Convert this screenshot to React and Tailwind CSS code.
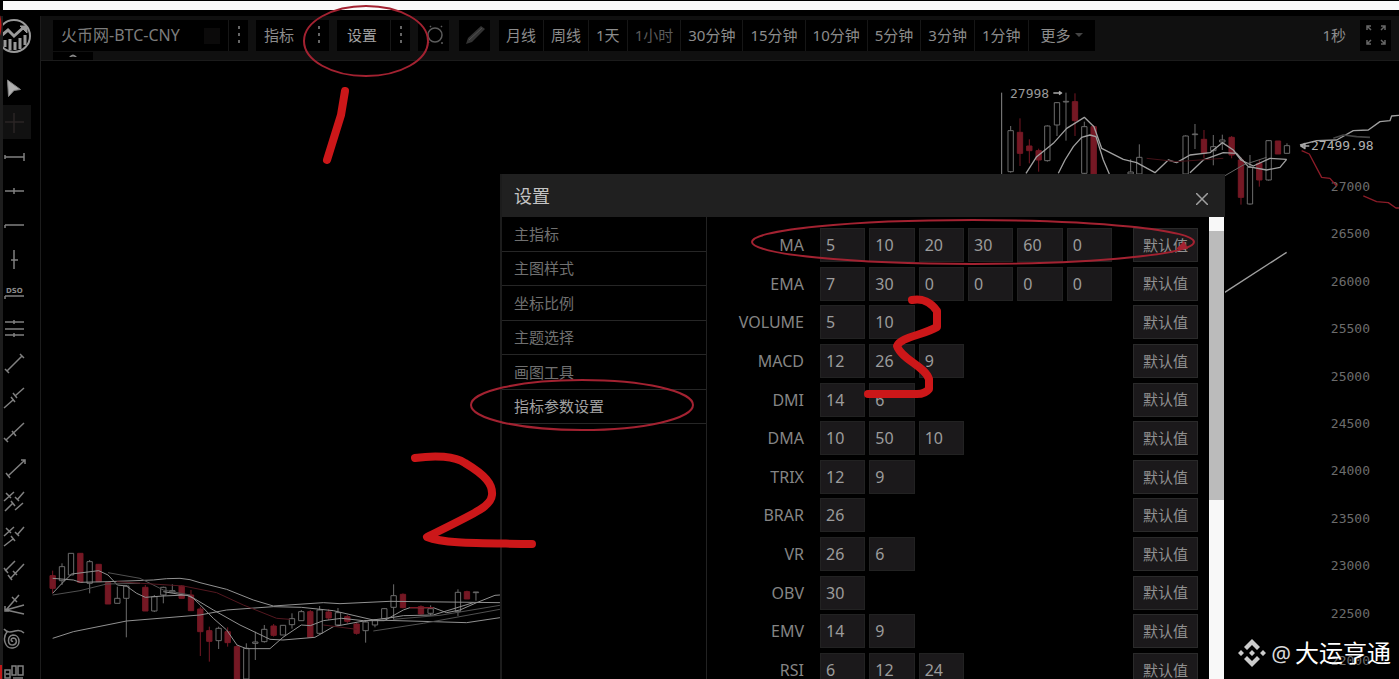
import React, { useState } from "react";

const intervals = ["月线", "周线", "1天", "1小时", "30分钟", "15分钟", "10分钟", "5分钟", "3分钟", "1分钟"];

const prices = [27000, 26500, 26000, 25500, 25000, 24500, 24000, 23500, 23000, 22500, 22000];

const menuItems = ["主指标", "主图样式", "坐标比例", "主题选择", "画图工具", "指标参数设置"];

const indicators = [
  { name: "MA", values: [5, 10, 20, 30, 60, 0] },
  { name: "EMA", values: [7, 30, 0, 0, 0, 0] },
  { name: "VOLUME", values: [5, 10] },
  { name: "MACD", values: [12, 26, 9] },
  { name: "DMI", values: [14, 6] },
  { name: "DMA", values: [10, 50, 10] },
  { name: "TRIX", values: [12, 9] },
  { name: "BRAR", values: [26] },
  { name: "VR", values: [26, 6] },
  { name: "OBV", values: [30] },
  { name: "EMV", values: [14, 9] },
  { name: "RSI", values: [6, 12, 24] },
];

// drawing tools, each path sits in a 28x34 box
const tools = [
  { name: "光标", d: "M4.5 9L17.5 18.5L11 19.5L5.5 25.5Z", fill: true },
  { name: "十字", d: "M11 8v20M2 17h19", active: true },
  { name: "线段", d: "M2 17H21M2 15v4M21 13v8" },
  { name: "直线", d: "M2 17H21M11 14v6" },
  { name: "射线", d: "M2 17H21M2 17v3" },
  { name: "垂直线", d: "M11 8v19M8 18h7" },
  { name: "价格线", d: "M2 19H21M2 19v3", text: "DSO" },
  { name: "平行线", d: "M2 11H21M2 18H21M2 24H21M11 9v4M11 22v4" },
  { name: "趋势线段", d: "M4 26L19 11M2 24l4 4M17 9l4 4" },
  { name: "趋势直线", d: "M1 28L10 20M8 17l4 5M12 16L21 8M10 13l4 5" },
  { name: "趋势射线", d: "M3 26L21 9M1 24l4 4M9 17l4 5" },
  { name: "箭头", d: "M5 28L22 12M3 25l4 5M18 12h4v4" },
  { name: "平行通道", d: "M1 19L11 10M3 11l5 5M14 18L21 10M12 15l4 4M2 29L10 21M8 19l4 5M12 28L20 21" },
  { name: "平行射线", d: "M1 19L11 10M3 11l5 5M14 18L21 10M12 15l4 4M1 29L10 22M8 19l4 5" },
  { name: "三条平行线", d: "M2 20L12 10M1 17l4 5M7 28L21 13M5 24l4 5M10 20l4 4" },
  { name: "扇形", d: "M3 25L16 10M9 12l5 5M3 25L21 20M3 25L21 29M2 21v5h4" },
  { name: "螺旋", d: "M1 9C4 13 8 12 12 11C16 10 19 11 21 13M4 12C-1 18 2 29 10 28C18 27 18 15 10 15C4 16 4 25 10 25C15 24 14 18 10 18C7 19 8 22 10 21" },
  { name: "磁铁", d: "M2 16h5v8h-5zM9 12h4v9h-4zM15 12h5v9h-5zM3 20h4M10 24h10" },
];

// [x, top, bottom, wickTop, wickBottom, up]
const lowCandles = [
  [38, 137, 175, 122, 190], [121, 70, 157, 70, 157], [176, 103, 155, 103, 155], [204, 158, 222, 158, 222],
  [316, 172, 243, 165, 243], [425, 168, 205, 165, 205], [453, 195, 242, 180, 242],
  [481, 237, 305, 230, 378], [508, 302, 334, 290, 395], [563, 305, 338, 292, 350], [591, 350, 447, 345, 447],
  [701, 288, 316, 282, 320], [811, 245, 322, 240, 322], [866, 246, 264, 238, 270], [922, 260, 274, 255, 280],
  [950, 282, 310, 278, 314], [1089, 193, 233, 190, 235], [1143, 230, 252, 226, 254], [1281, 185, 207, 182, 207],
  [66, 110, 152, 100, 165, 1], [93, 70, 135, 70, 135, 1], [149, 95, 160, 90, 190, 1], [232, 205, 220, 170, 220, 1],
  [259, 168, 205, 165, 322, 1], [343, 200, 243, 195, 246, 1], [370, 172, 195, 170, 220, 1], [397, 182, 186, 163, 188, 1],
  [536, 295, 332, 290, 357, 1], [619, 355, 447, 340, 447, 1], [646, 336, 340, 305, 390, 1], [673, 298, 335, 285, 338, 1],
  [729, 286, 315, 286, 315, 1], [756, 266, 284, 250, 296, 1], [784, 245, 272, 240, 272, 1], [839, 240, 310, 228, 312, 1],
  [894, 248, 285, 234, 288, 1], [977, 276, 302, 270, 338, 1], [1005, 270, 285, 268, 292, 1], [1033, 236, 266, 234, 268, 1],
  [1061, 197, 232, 163, 268, 1], [1172, 236, 250, 226, 256, 1], [1254, 187, 245, 178, 258, 1], [1308, 186, 188, 186, 212, 1],
];

const highCandles = [
  [90, 157, 220, 115, 258], [118, 198, 212, 178, 250], [146, 212, 240, 206, 275], [255, 65, 122, 40, 168],
  [311, 140, 283, 136, 283], [642, 178, 220, 150, 235], [725, 172, 225, 168, 235], [753, 240, 352, 232, 374],
  [808, 250, 300, 240, 320], [864, 183, 222, 183, 222],
  [62, 152, 275, 138, 278, 1], [172, 138, 242, 136, 245, 1], [201, 68, 135, 66, 168, 1], [228, 64, 66, 38, 182, 1],
  [283, 140, 280, 125, 282, 1], [422, 276, 282, 238, 282, 1], [448, 232, 282, 193, 282, 1], [587, 168, 282, 166, 282, 1],
  [615, 162, 164, 132, 207, 1], [670, 200, 212, 165, 256, 1], [697, 180, 186, 164, 210, 1], [780, 262, 372, 225, 374, 1],
  [836, 182, 300, 180, 302, 1], [891, 197, 220, 190, 220, 1],
];

const Candles = ({ data }) => (
  <>
    {data.map(([x, top, bottom, wickTop, wickBottom, up]) => (
      <g key={x} stroke={up ? "#6c6c6c" : "#751824"} strokeWidth="3" fill={up ? "#000000" : "#751824"}>
        <path d={`M${x} ${wickTop}V${wickBottom}`} />
        <rect x={x - 8} y={top} width="16" height={bottom - top} />
      </g>
    ))}
  </>
);

const Chart = () => (
  <svg viewBox="0 0 1399 679" className="absolute inset-0 w-full h-full pointer-events-none" fill="none">
    <g transform="translate(40 530) scale(0.3333)" strokeLinejoin="round">
      <Candles data={lowCandles} />
      <g stroke="#929292" strokeWidth="3">
        <path d="M38 190L66 160L95 132L176 122L204 135L232 165L259 168L290 190L316 202L370 198L440 195L460 205L481 225L520 265L560 300L591 345L619 356L690 356L729 322L784 285L811 287L850 272L905 265L970 272L1033 272L1090 240L1110 233L1180 233L1220 248L1260 240L1310 218L1365 196L1380 195" />
        <path d="M38 145L100 150L121 157L204 155L340 150L380 146L420 145L450 149L480 158L560 178L640 210L700 228L850 218L900 221L1050 214L1380 218" />
        <path d="M38 325L100 305L260 273L480 255L560 240L700 230L784 232L880 242L1000 270L1180 275L1280 278L1380 263" />
        <path d="M370 185L450 198L520 240L600 285L690 328L729 330L825 322L880 290L960 275L1060 262L1090 257L1180 255L1300 218" />
      </g>
      <g stroke="#505050" strokeWidth="3">
        <path d="M38 195L120 182L200 162L300 160" />
        <path d="M204 128L300 145L370 180L450 195" />
        <path d="M1000 303L1150 280L1380 238" />
        <path d="M1060 268L1200 256L1380 226" />
      </g>
      <path d="M230 155L430 168L530 188L610 225L710 265L750 268M850 285L950 298" stroke="#541820" strokeWidth="3" />
      <path d="M1110 233L1180 233" stroke="#7d1a26" strokeWidth="4" />
    </g>

    <g transform="translate(990 80) scale(0.3333)" strokeLinejoin="round">
      <path d="M35 38V282" stroke="#8a8a8a" strokeWidth="3" />
      <Candles data={highCandles} />
      <g stroke="#a0a0a0" strokeWidth="4">
        <path d="M108 280L140 230L190 190L230 145L283 112L312 140L335 205L400 238L440 248L495 278L535 240L560 248L600 225L660 218L697 188L730 210L753 240L790 258L840 235L890 238" />
        <path d="M205 280L225 240L250 200L275 172L300 165L318 170L340 240L358 282" />
        <path d="M600 278L640 240L700 218L740 220L775 260L830 270L870 262L890 238" />
        <path d="M703 638L890 517" />
        <path d="M930 195L980 182L1040 180L1090 152L1135 150L1170 125L1200 122L1205 108L1227 106" />
      </g>
      <path d="M705 287L760 255L830 232" stroke="#666666" strokeWidth="3" />
      <path d="M470 235L560 245L700 235" stroke="#451218" strokeWidth="3" />
      <path d="M1030 175L1060 165L1100 170L1140 172" stroke="#444444" strokeWidth="5" />
      <path d="M935 212L958 222L995 292L1020 295L1040 318M1120 348L1160 365L1195 368L1218 384L1227 384" stroke="#8c1c28" strokeWidth="4" />
      <path d="M190 39H214M207 34L215 39L207 44" stroke="#a8a8a8" strokeWidth="4" />
      <path d="M958 198H935M945 190L932 198L945 206Z" stroke="#a8a8a8" strokeWidth="4" />
    </g>

    <g fill="#9a9a9a" fontSize="13" className="font-['DejaVu_Sans_Mono',monospace]">
      <text x="1010" y="98">27998</text>
      <text x="1311" y="150" fill="#b0b0b0">27499.98</text>
    </g>
  </svg>
);

const Dots = () => (
  <svg width="4" height="20" viewBox="0 0 4 20" fill="#666666">
    <rect x="1" y="1" width="2" height="3" />
    <rect x="1" y="8" width="2" height="3" />
    <rect x="1" y="15" width="2" height="3" />
  </svg>
);

const Toolbar = () => (
  <header className="relative flex items-center h-[45px] pl-3 pr-2 pb-[6px] bg-[#101010] border-b border-[#1b1b1b] text-[15px] text-[#8c8c8c] whitespace-nowrap">
    <div className="flex h-[31px] w-[195px] bg-black">
      <button type="button" className="flex-1 pl-2 text-left text-base text-[#7c7c7c]">火币网-BTC-CNY</button>
      <span className="w-4 h-4 mt-2 mr-2 bg-[#0b0a0a]"></span>
      <button type="button" aria-label="交易对菜单" className="w-5 flex items-center justify-center border-l border-[#161616]"><Dots /></button>
    </div>
    <div className="flex h-[31px] w-[73px] ml-2 bg-black">
      <button type="button" className="flex-1 pl-2 text-left">指标</button>
      <button type="button" aria-label="指标菜单" className="w-5 flex items-center justify-center"><Dots /></button>
    </div>
    <div className="flex h-[31px] w-[73px] ml-2 bg-black text-[#a0a0a0]">
      <button type="button" className="flex-1 pl-[10px] text-left">设置</button>
      <button type="button" aria-label="设置菜单" className="w-5 flex items-center justify-center border-l border-[#161616]"><Dots /></button>
    </div>
    <button type="button" aria-label="亮度" className="flex items-center justify-center h-[31px] w-[31px] ml-2 bg-black">
      <svg width="24" height="24" viewBox="0 0 24 24" fill="none" stroke="#5c5c5c" strokeWidth="1.5">
        <circle cx="13" cy="12" r="7" />
        <path d="M8 3l1 1M19 4l1-1M20 19v2M7 19l-1 1" />
      </svg>
    </button>
    <button type="button" aria-label="画笔" className="flex items-center justify-center h-[31px] w-[31px] ml-[10px] bg-black">
      <svg width="24" height="24" viewBox="0 0 24 24">
        <path d="M3 21L5 15L18 3L22 6L9 19Z" fill="#333333" />
        <path d="M6 17L19 5" stroke="#505050" strokeWidth="1" />
      </svg>
    </button>
    <nav className="flex h-[31px] ml-[9px] bg-black">
      {intervals.map((item) => (
        <button key={item} type="button" className={`px-[7px] border-r border-[#161616] ${item === "1小时" ? "text-[#5a5a5a]" : ""}`}>{item}</button>
      ))}
      <button type="button" className="flex items-center gap-1 pl-3 pr-3">
        更多
        <svg width="8" height="4" viewBox="0 0 8 4" fill="#444444"><path d="M0 0h8L4 4z" /></svg>
      </button>
    </nav>
    <span className="ml-auto mr-[14px]">1秒</span>
    <button type="button" aria-label="全屏" className="flex items-center justify-center h-[31px] w-[31px] bg-black">
      <svg width="20" height="20" viewBox="0 0 20 20" fill="none" stroke="#666666" strokeWidth="1.5">
        <path d="M1 5V1H5M1 1L5 5M15 1H19V5M19 1L15 5M1 15V19H5M1 19L5 15M19 15V19H15M19 19L15 15" />
      </svg>
    </button>
    <span className="absolute left-3 top-[36px] w-10 h-2 bg-black flex items-center justify-center">
      <svg width="8" height="4" viewBox="0 0 8 4" fill="#888888"><path d="M0 3Q4 -2 8 3L6 3Q4 2 2 3z" /></svg>
    </span>
  </header>
);

const Sidebar = () => (
  <aside className="w-[38px] shrink-0 border-r border-[#1c1c1c] flex flex-col">
    <svg width="32" height="38" viewBox="3 17 32 38" fill="none" stroke="#999999" strokeWidth="2" className="shrink-0">
      <circle cx="14" cy="37" r="16" />
      <path d="M1 37L8 31L14 37L24 28" strokeWidth="3" />
      <path d="M20 27H27V34Z" fill="#999999" strokeWidth="1" />
      <path d="M5 41V48M10 40V51M15 43V51M20 39V50M25 36V46" strokeWidth="3" />
    </svg>
    <div className="flex flex-col justify-between h-[617px] shrink-0 mt-[17px]">
      {tools.map((tool) => (
        <button key={tool.name} type="button" aria-label={tool.name} className={`w-7 h-[34px] ${tool.active ? "bg-[#111111]" : ""}`}>
          <svg width="28" height="34" viewBox="0 0 28 34" fill={tool.fill ? "#b0b0b0" : "none"} stroke={tool.active ? "#2a2525" : "#808080"} strokeWidth={tool.fill ? "1" : "1.5"}>
            <path d={tool.d} />
            {tool.text && <text x="3" y="16" fontSize="7" fill="#8a8a8a" stroke="none" className="font-bold font-['DejaVu_Sans',sans-serif]">{tool.text}</text>}
          </svg>
        </button>
      ))}
    </div>
  </aside>
);

const SettingsDialog = () => {
  const [current, setCurrent] = useState("指标参数设置");

  return (
    <section role="dialog" aria-label="设置" className="absolute left-[500px] top-[174px] bottom-0 w-[725px] flex flex-col bg-black border-l-2 border-[#1c1c1c]">
      <div className="flex items-center justify-between h-[43px] shrink-0 pl-3 pr-[17px] bg-[#202020]">
        <h2 className="text-lg text-[#c4c4c4]">设置</h2>
        <button type="button" aria-label="关闭" className="mt-[6px]">
          <svg width="12" height="12" viewBox="0 0 12 12" stroke="#a0a0a0" strokeWidth="1.5"><path d="M0 0L12 12M12 0L0 12" /></svg>
        </button>
      </div>
      <div className="flex flex-1 min-h-0">
        <div className="w-[205px] shrink-0 border-r border-[#222222]">
          <div className="flex flex-col h-[207px]">
            {menuItems.map((item) => (
              <button key={item} type="button" onClick={() => setCurrent(item)} className={`flex-1 pl-3 text-left text-[15px] leading-5 border-b border-[#262626] ${item === current ? "text-[#a0a0a0]" : "text-[#707070]"}`}>{item}</button>
            ))}
          </div>
        </div>
        <div className="flex-1 min-w-0 overflow-hidden pt-[11px] pr-[11px]">
          <div className="flex flex-col justify-between h-[459px]">
            {indicators.map(({ name, values }) => (
              <div key={name} className="flex items-center h-[34px]">
                <label htmlFor={`${name}-0`} className="w-[97px] text-right text-base text-[#858585]">{name}</label>
                <div className="grid grid-cols-6 gap-1 w-[292px] ml-4">
                  {values.map((value, index) => (
                    <input key={index} id={`${name}-${index}`} aria-label={`${name} ${index + 1}`} type="text" defaultValue={value} className="w-full h-[34px] pl-[5px] bg-[#1b191b] border border-[#222222] text-base text-[#9c9c9c]" />
                  ))}
                </div>
                <button type="button" className="ml-auto w-[65px] h-[34px] bg-[#1b191b] border border-[#2a2a2a] text-[15px] text-[#909090]">默认值</button>
              </div>
            ))}
          </div>
        </div>
        <div className="w-[15px] mr-px shrink-0 bg-[#f8f8f8] pt-[14px]">
          <div className="h-[269px] bg-[#bbbbbb]"></div>
        </div>
      </div>
    </section>
  );
};

const Annotations = () => (
  <svg viewBox="0 0 1399 679" className="absolute inset-0 w-full h-full pointer-events-none" fill="none">
    <g stroke="#a32231" strokeWidth="2">
      <ellipse cx="366" cy="41" rx="62" ry="35" />
      <ellipse cx="582" cy="405" rx="111" ry="25" />
      <ellipse cx="973" cy="242" rx="221" ry="22" />
    </g>
    <path d="M1176 249L1184 241L1188 249Z" fill="#a32231" />
    <g stroke="#cc1719" strokeWidth="8" strokeLinecap="round" strokeLinejoin="round">
      <path d="M345 91L341 115L327 160" />
      <path d="M415 458C435 455 455 456 465 463C485 475 493 484 492 495C491 506 480 511 427 537C445 544 480 543 532 544" />
      <path d="M912 300C922 298 931 302 937 311V327C924 335 900 337 897 346C902 360 925 366 929 379V389C926 393 922 394 917 394H868" />
    </g>
    <path d="M0 15Q3 25 0 36ZM0 665h2v14h-2z" fill="#c01818" />
  </svg>
);

const Watermark = () => (
  <div className="absolute right-2 bottom-[10px] flex items-center gap-1 text-2xl leading-8 text-white">
    <svg width="28" height="28" viewBox="0 0 28 28" fill="#cccccc">
      <path d="M14 0L22 8L19 11L14 6L9 11L6 8ZM14 28L22 20L19 17L14 22L9 17L6 20ZM3 11L6 14L3 17L0 14ZM25 11L28 14L25 17L22 14ZM14 11L17 14L14 17L11 14Z" />
    </svg>
    <span className="ml-px text-[22px] text-[#d8d8d8]">@</span>
    <span>大运亨通</span>
  </div>
);

const App = () => {
  return (
    <div className="relative h-screen overflow-hidden flex flex-col bg-black font-['Noto_Sans','Noto_Sans_CJK_SC',sans-serif]">
      <div className="h-[9px] shrink-0 mt-px ml-[3px] mb-[6px] bg-[#fafafa]"></div>
      <div className="flex flex-1 min-h-0 border-l-[3px] border-[#1d1d1d]">
        <Sidebar />
        <div className="flex flex-col flex-1 min-w-0">
          <Toolbar />
          <main className="flex flex-1 justify-end pt-[116px] pr-[29px]">
            <div className="flex flex-col justify-between h-[494px] shrink-0 text-[13px] leading-5 text-[#6c6c6c] font-['DejaVu_Sans_Mono',monospace]">
              {prices.map((price) => (
                <span key={price}>{price}</span>
              ))}
            </div>
          </main>
        </div>
      </div>
      <Chart />
      <SettingsDialog />
      <Annotations />
      <Watermark />
    </div>
  );
};

export default App;
